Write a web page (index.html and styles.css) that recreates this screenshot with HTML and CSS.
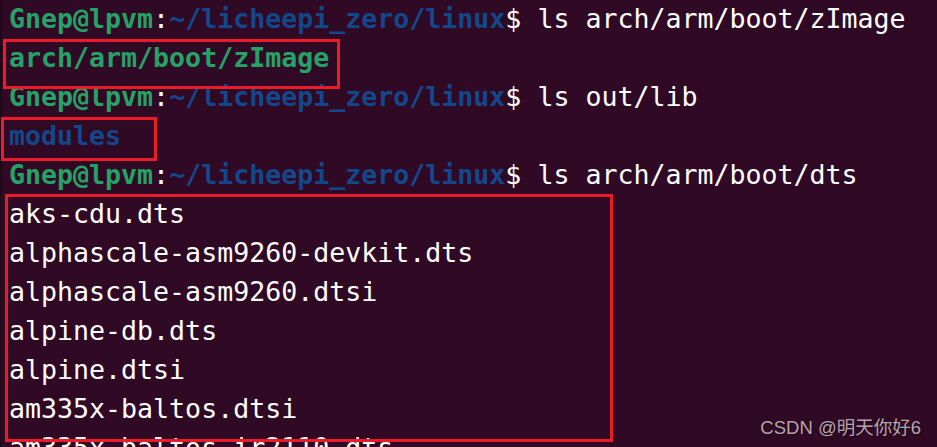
FILE: index.html
```html
<!DOCTYPE html>
<html lang="en">
<head>
<meta charset="utf-8">
<title>Terminal</title>
<link rel="stylesheet" href="styles.css">
</head>
<body>
<div class="term">
  <div class="edge"></div>
  <pre class="screen"><span class="user">Gnep@lpvm</span>:<span class="path">~/licheepi_zero/linux</span>$ ls arch/arm/boot/zImage
<span class="user">arch/arm/boot/zImage</span>
<span class="user">Gnep@lpvm</span>:<span class="path">~/licheepi_zero/linux</span>$ ls out/lib
<span class="path">modules</span>
<span class="user">Gnep@lpvm</span>:<span class="path">~/licheepi_zero/linux</span>$ ls arch/arm/boot/dts
aks-cdu.dts
alphascale-asm9260-devkit.dts
alphascale-asm9260.dtsi
alpine-db.dts
alpine.dtsi
am335x-baltos.dtsi
am335x-baltos-ir2110.dts</pre>
  <div class="mark mark-zimage"></div>
  <div class="mark mark-modules"></div>
  <div class="mark mark-dts"></div>
  <div class="watermark">CSDN @明天你好6</div>
</div>
</body>
</html>
```

FILE: styles.css
```css
html, body {
  margin: 0;
  padding: 0;
  background: #300a24;
}

.term {
  position: relative;
  width: 937px;
  height: 447px;
  overflow: hidden;
  background: #300a24;
}

.edge {
  position: absolute;
  left: 0;
  top: 0;
  width: 2px;
  height: 100%;
  background: #1e0a17;
}

.screen {
  margin: -1px 0 0 0;
  padding: 0 0 0 9px;
  font-family: "DejaVu Sans Mono", monospace;
  font-size: 26.6px;
  line-height: 39px;
  color: #ffffff;
  white-space: pre;
}

.user {
  color: #26a269;
  font-weight: bold;
}

.path {
  color: #12488b;
  font-weight: bold;
}

.mark {
  position: absolute;
  border: 3px solid #ea1c2a;
  box-sizing: border-box;
}

.mark-zimage {
  left: 3px;
  top: 39px;
  width: 337px;
  height: 50px;
}

.mark-modules {
  left: 1px;
  top: 117px;
  width: 156px;
  height: 44px;
}

.mark-dts {
  left: 5px;
  top: 194px;
  width: 608px;
  height: 248px;
}

.watermark {
  position: absolute;
  right: 16px;
  bottom: 8px;
  font-family: "Liberation Sans", "Noto Sans CJK SC", sans-serif;
  font-size: 18.5px;
  color: #b4a4ae;
  text-shadow: 1px 1px 1px rgba(0, 0, 0, 0.5);
}
```
